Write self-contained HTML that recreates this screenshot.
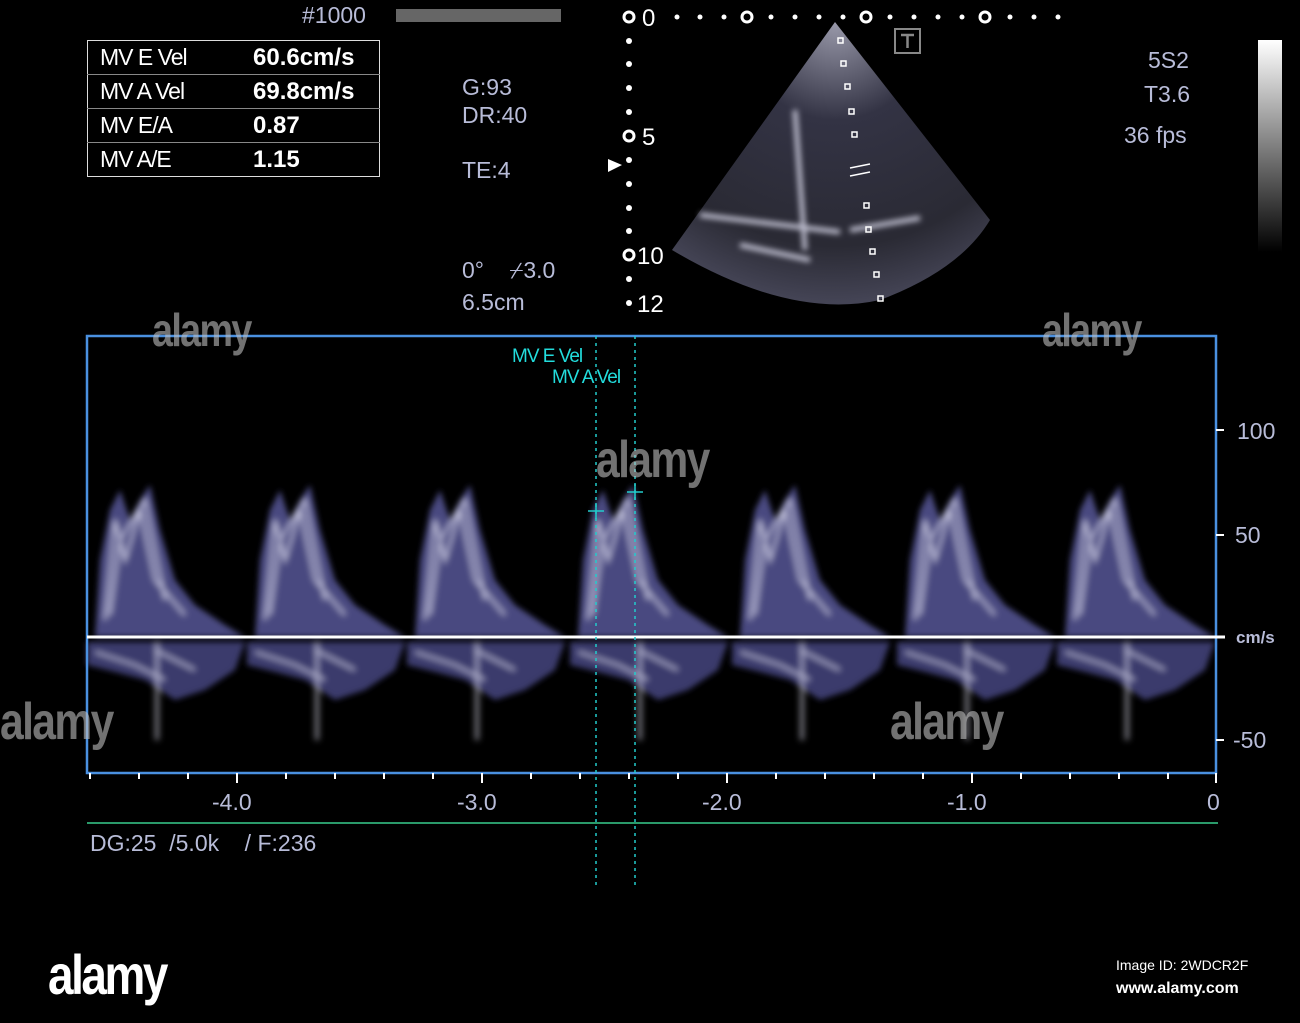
<!DOCTYPE html>
<html><head><meta charset="utf-8"><style>
body{margin:0;background:#000;width:1300px;height:1023px;overflow:hidden;position:relative;font-family:"Liberation Sans",sans-serif;}
.t{position:absolute;color:#b8bcd8;font-size:23px;white-space:nowrap;}
.w{position:absolute;color:#fff;white-space:nowrap;}
table{position:absolute;left:87px;top:40px;width:293px;height:135px;border:1.5px solid #ddd;border-collapse:collapse;color:#fff;font-size:23px;}
td{border-bottom:1px solid #888;padding:0 0 0 12px;height:33px;letter-spacing:-1px;}
td.v{font-size:24px;font-weight:bold;letter-spacing:0;padding-left:0;}
.wm{position:absolute;color:rgba(190,190,190,.6);font-weight:bold;transform:scaleX(.82);transform-origin:left top;letter-spacing:-2px;}
.dl{position:absolute;color:#fff;font-size:24px;}
</style></head><body>
<div class="t" style="left:302px;top:2px;">#1000</div>
<div style="position:absolute;left:396px;top:9px;width:165px;height:13px;background:#666;"></div>
<table>
<tr><td style="width:153px">MV E Vel</td><td class="v">60.6cm/s</td></tr>
<tr><td>MV A Vel</td><td class="v">69.8cm/s</td></tr>
<tr><td>MV E/A</td><td class="v">0.87</td></tr>
<tr><td style="border:0">MV A/E</td><td class="v" style="border:0">1.15</td></tr>
</table>
<div class="t" style="left:462px;top:74px;">G:93</div>
<div class="t" style="left:462px;top:102px;">DR:40</div>
<div class="t" style="left:462px;top:157px;">TE:4</div>
<div class="t" style="left:462px;top:257px;">0°&nbsp;&nbsp;&nbsp;&nbsp;⌿3.0</div>
<div class="t" style="left:462px;top:289px;">6.5cm</div>
<div class="t" style="left:1148px;top:47px;">5S2</div>
<div class="t" style="left:1144px;top:81px;">T3.6</div>
<div class="t" style="left:1124px;top:122px;">36 fps</div>
<div style="position:absolute;left:1258px;top:40px;width:24px;height:212px;background:linear-gradient(#fff,#999 40%,#000);"></div>
<div class="dl" style="left:642px;top:5px;">0</div>
<div class="dl" style="left:642px;top:124px;">5</div>
<div class="dl" style="left:637px;top:243px;">10</div>
<div class="dl" style="left:637px;top:291px;">12</div>

<svg width="1300" height="1023" style="position:absolute;left:0;top:0">
<defs>
<radialGradient id="sg" cx="835" cy="22" r="280" gradientUnits="userSpaceOnUse"><stop offset="0" stop-color="#99a"/><stop offset=".35" stop-color="#334"/><stop offset=".8" stop-color="#2a2a34"/><stop offset="1" stop-color="#445"/></radialGradient>
<filter id="bl"><feGaussianBlur stdDeviation="3"/></filter>
<filter id="bl2"><feGaussianBlur stdDeviation="1.5"/></filter>
<g id="cy">
<path d="M0,637 L5,560 L15,510 L25,490 L35,520 L45,500 L55,485 L65,530 L80,580 L100,605 L130,625 L150,637 Z" fill="#4a4a80"/>
<path d="M-8,642 L-8,665 L20,672 L50,680 L80,700 L110,690 L140,670 L150,642 Z" fill="#3a3a6c"/>
<g stroke="#dde" stroke-width="3" fill="none" filter="url(#bl2)" opacity=".8">
<path d="M10,620 L20,520 L30,560 L45,510 L60,580 L90,615"/>
<path d="M15,615 L25,540 L50,500 L70,600"/>
<path d="M0,652 L40,665 L70,680 M60,650 L100,670 M62,642 L62,740"/>
</g>
</g>
</defs>
<path d="M835,22 L672,250 Q790,320 880,300 Q960,270 990,220 Z" fill="url(#sg)"/>
<path d="M795,110 L805,250 M700,215 L840,232 M740,245 L810,260 M850,230 L920,218" stroke="#bbc" stroke-width="5" filter="url(#bl)" fill="none"/>
<g fill="#fff">
<circle cx="629" cy="41" r="3"/><circle cx="629" cy="64" r="3"/><circle cx="629" cy="88" r="3"/><circle cx="629" cy="112" r="3"/><circle cx="629" cy="160" r="3"/><circle cx="629" cy="184" r="3"/><circle cx="629" cy="208" r="3"/><circle cx="629" cy="231" r="3"/><circle cx="629" cy="279" r="3"/><circle cx="629" cy="303" r="3"/>
<circle cx="677" cy="17" r="2.5"/><circle cx="700" cy="17" r="2.5"/><circle cx="724" cy="17" r="2.5"/><circle cx="771" cy="17" r="2.5"/><circle cx="795" cy="17" r="2.5"/><circle cx="819" cy="17" r="2.5"/><circle cx="843" cy="17" r="2.5"/><circle cx="890" cy="17" r="2.5"/><circle cx="914" cy="17" r="2.5"/><circle cx="938" cy="17" r="2.5"/><circle cx="962" cy="17" r="2.5"/><circle cx="1010" cy="17" r="2.5"/><circle cx="1034" cy="17" r="2.5"/><circle cx="1058" cy="17" r="2.5"/>
<path d="M608,159 L622,165 L608,172 Z"/>
</g>
<g fill="none" stroke="#fff" stroke-width="3"><circle cx="629" cy="17" r="5"/><circle cx="629" cy="136" r="5"/><circle cx="629" cy="255" r="5"/><circle cx="747" cy="17" r="5"/><circle cx="866" cy="17" r="5"/><circle cx="985" cy="17" r="5"/></g>
<rect x="895" y="29" width="25" height="24" fill="none" stroke="#888" stroke-width="2"/>
<path d="M901,35 h13 M907.5,35 v13" stroke="#888" stroke-width="2.5"/>
<g fill="none" stroke="#fff" stroke-width="1.5">
<rect x="838" y="38" width="5" height="5"/><rect x="841" y="61" width="5" height="5"/><rect x="845" y="84" width="5" height="5"/><rect x="849" y="109" width="5" height="5"/><rect x="852" y="132" width="5" height="5"/><rect x="864" y="203" width="5" height="5"/><rect x="866" y="227" width="5" height="5"/><rect x="870" y="249" width="5" height="5"/><rect x="874" y="272" width="5" height="5"/><rect x="878" y="296" width="5" height="5"/>
<path d="M850,168 L870,164 M850,176 L870,172"/></g>
<g filter="url(#bl)">
<use href="#cy" x="95"/><use href="#cy" x="255"/><use href="#cy" x="415"/><use href="#cy" x="578"/><use href="#cy" x="740"/><use href="#cy" x="905"/><use href="#cy" x="1065"/>
</g>
<rect x="87" y="336" width="1129" height="437" fill="none" stroke="#4a90e0" stroke-width="2.5"/>
<line x1="87" y1="637" x2="1225" y2="637" stroke="#fff" stroke-width="3"/>
<line x1="87" y1="823" x2="1218" y2="823" stroke="#2a9a6a" stroke-width="2"/>
<g stroke="#2cc" stroke-width="1.5" stroke-dasharray="3,4"><line x1="596" y1="336" x2="596" y2="888"/><line x1="635" y1="336" x2="635" y2="888"/></g>
<g stroke="#2cc" stroke-width="1.5"><path d="M588,511 H604 M596,503 V519 M627,492 H643 M635,484 V500"/></g>
<g stroke="#fff" stroke-width="2">
<path d="M90,773 v6 M139,773 v6 M188,773 v6 M237,773 v10 M286,773 v6 M335,773 v6 M384,773 v6 M433,773 v6 M482,773 v10 M531,773 v6 M580,773 v6 M629,773 v6 M678,773 v6 M727,773 v10 M776,773 v6 M825,773 v6 M874,773 v6 M923,773 v6 M972,773 v10 M1021,773 v6 M1070,773 v6 M1119,773 v6 M1168,773 v6 M1216,773 v10"/>
<path d="M1216,430 h8 M1216,535 h8 M1216,740 h8"/></g>
</svg>
<div style="position:absolute;left:512px;top:346px;color:#2dd;font-size:19px;letter-spacing:-1px;">MV E Vel</div>
<div style="position:absolute;left:552px;top:367px;color:#2dd;font-size:19px;letter-spacing:-1px;">MV A Vel</div>
<div class="t" style="left:1237px;top:418px;">100</div>
<div class="t" style="left:1235px;top:522px;">50</div>
<div class="t" style="left:1236px;top:628px;font-size:17px;font-weight:bold;">cm/s</div>
<div class="t" style="left:1233px;top:727px;">-50</div>
<div class="t" style="left:212px;top:789px;">-4.0</div>
<div class="t" style="left:457px;top:789px;">-3.0</div>
<div class="t" style="left:702px;top:789px;">-2.0</div>
<div class="t" style="left:947px;top:789px;">-1.0</div>
<div class="t" style="left:1207px;top:789px;">0</div>
<div class="t" style="left:90px;top:830px;">DG:25&nbsp;&nbsp;/5.0k&nbsp;&nbsp;&nbsp;&nbsp;/ F:236</div>
<div class="wm" style="left:152px;top:303px;font-size:46px;">alamy</div>
<div class="wm" style="left:1042px;top:303px;font-size:46px;">alamy</div>
<div class="wm" style="left:596px;top:430px;font-size:52px;">alamy</div>
<div class="wm" style="left:0px;top:692px;font-size:52px;">alamy</div>
<div class="wm" style="left:890px;top:692px;font-size:52px;">alamy</div>
<div class="w" style="left:48px;top:942px;font-size:56px;font-weight:bold;letter-spacing:-3px;transform:scaleX(.82);transform-origin:left top;">alamy</div>
<div class="w" style="left:1116px;top:957px;font-size:14px;">Image ID: 2WDCR2F</div>
<div class="w" style="left:1116px;top:980px;font-size:16px;font-weight:bold;">www.alamy.com</div>
</body></html>
